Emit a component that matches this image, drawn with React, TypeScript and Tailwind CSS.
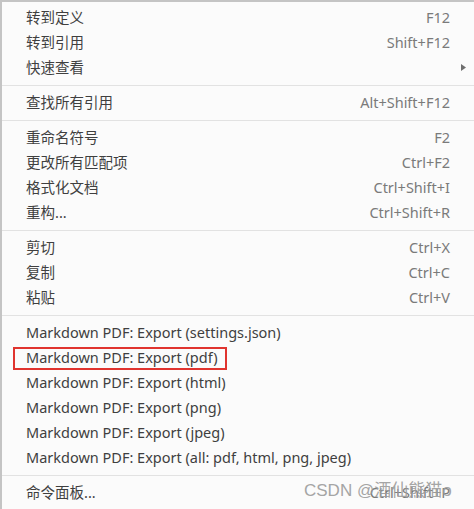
import React from "react";

type Item = { label: string; shortcut?: string; submenu?: boolean; boxed?: boolean };

const groups: Item[][] = [
  [
    { label: "转到定义", shortcut: "F12" },
    { label: "转到引用", shortcut: "Shift+F12" },
    { label: "快速查看", submenu: true },
  ],
  [{ label: "查找所有引用", shortcut: "Alt+Shift+F12" }],
  [
    { label: "重命名符号", shortcut: "F2" },
    { label: "更改所有匹配项", shortcut: "Ctrl+F2" },
    { label: "格式化文档", shortcut: "Ctrl+Shift+I" },
    { label: "重构...", shortcut: "Ctrl+Shift+R" },
  ],
  [
    { label: "剪切", shortcut: "Ctrl+X" },
    { label: "复制", shortcut: "Ctrl+C" },
    { label: "粘贴", shortcut: "Ctrl+V" },
  ],
  [
    { label: "Markdown PDF: Export (settings.json)" },
    { label: "Markdown PDF: Export (pdf)", boxed: true },
    { label: "Markdown PDF: Export (html)" },
    { label: "Markdown PDF: Export (png)" },
    { label: "Markdown PDF: Export (jpeg)" },
    { label: "Markdown PDF: Export (all: pdf, html, png, jpeg)" },
  ],
  [{ label: "命令面板...", shortcut: "Ctrl+Shift+P" }],
];

function Row({ item }: { item: Item }) {
  return (
    <div className="relative flex h-[25px] items-center pl-[24px] pr-[24px]">
      <span className="relative text-[#3f3f3f]">
        {item.label}
        {item.boxed && (
          <span className="absolute left-[-13px] right-[-9px] top-[-3px] bottom-[-5px] border-2 border-[#e0342f]" />
        )}
      </span>
      <span className="ml-auto text-[#7a7a7a]">{item.shortcut}</span>
      {item.submenu && (
        <svg className="absolute right-[8px] top-[9px]" width="5" height="7" viewBox="0 0 5 7">
          <path d="M0 0 L5 3.5 L0 7 Z" fill="#6f6f6f" />
        </svg>
      )}
    </div>
  );
}

export default function App() {
  return (
    <div
      className="relative h-[509px] w-[474px] overflow-hidden border-l-2 border-t-2 border-[#c4c4c4] bg-[#fbfbfb] pt-[3px] text-[14.5px] leading-none"
      style={{ fontFamily: '"Noto Sans", "Noto Sans CJK SC", sans-serif' }}
    >
      {groups.map((g, gi) => (
        <div key={gi}>
          {gi > 0 && (
            <div className="flex h-[10px] items-center">
              <div className="h-px w-full bg-[#e2e2e2]" />
            </div>
          )}
          {g.map((it, i) => (
            <Row key={i} item={it} />
          ))}
        </div>
      ))}
      <div
        className="absolute left-[302px] top-[480px] text-[17px] text-[#9c9c9c] opacity-90"
        style={{ fontFamily: '"Liberation Sans", "Noto Sans CJK SC", sans-serif' }}
      >
        CSDN @酒仙熊猫o
      </div>
    </div>
  );
}
